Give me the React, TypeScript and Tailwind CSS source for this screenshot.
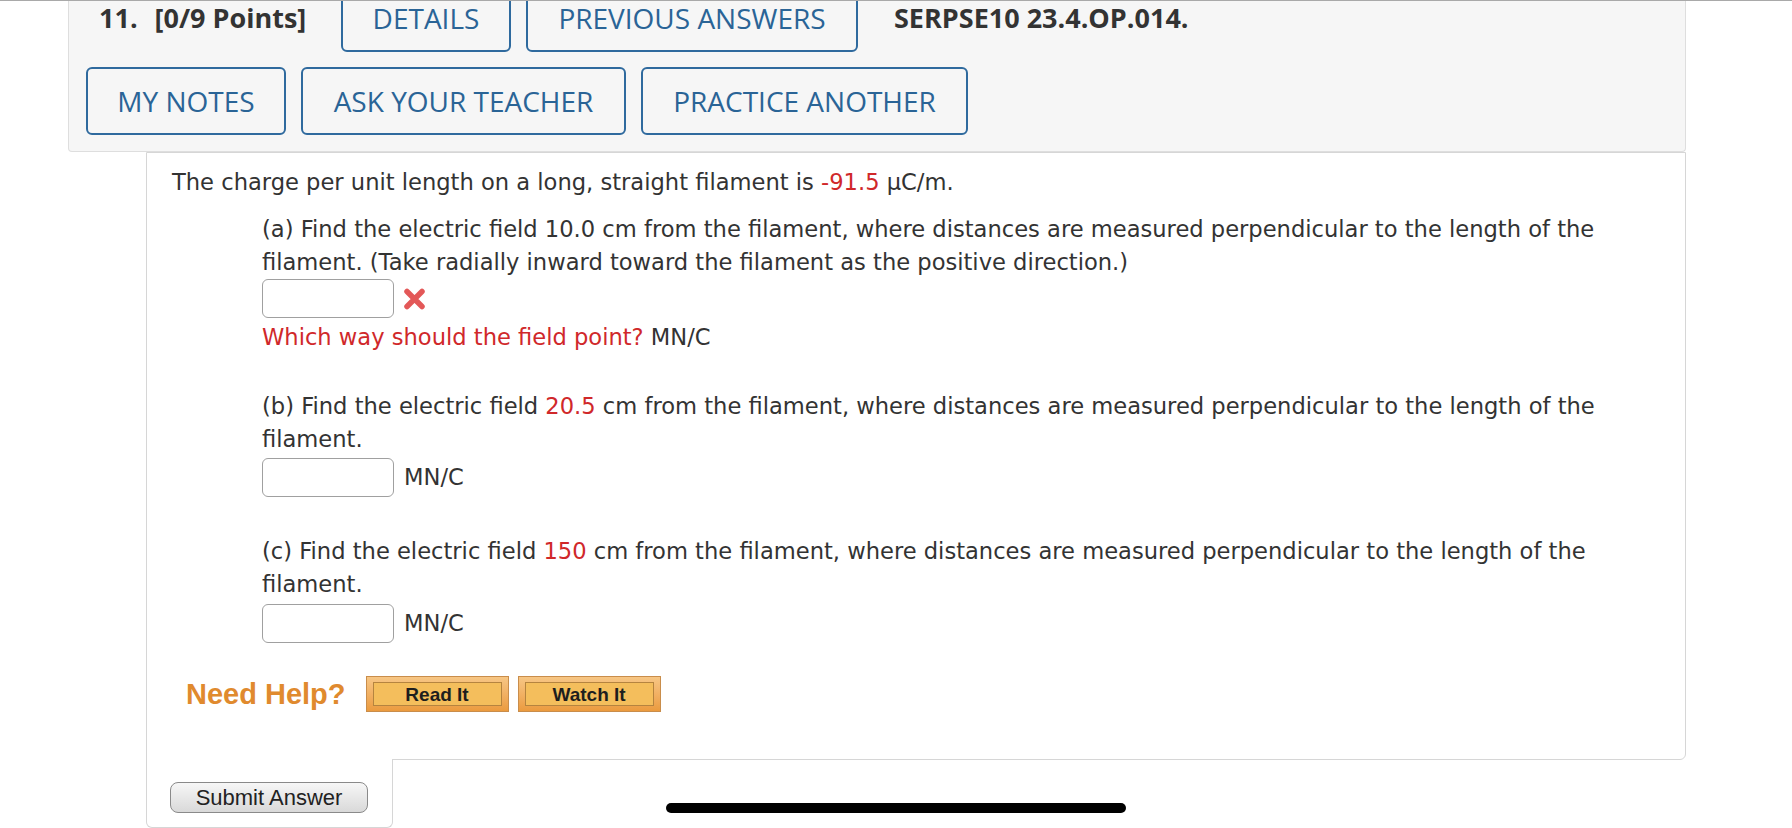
import React from "react";

const RED = "text-[#d0282a]";

function AnswerBox() {
  return <div className="w-[132px] h-[39px] rounded-[6px] border-[1.5px] border-[#a0a0a0] bg-white shrink-0" />;
}

function WrongMark() {
  return (
    <svg width="26" height="22" viewBox="0 0 26 22" className="ml-[8px]">
      <path d="M5 3.5 L20 18.5 M20 3.5 L5 18.5" stroke="#e35858" strokeWidth="5.5" strokeLinecap="round" />
    </svg>
  );
}

function HelpButton({ label }: { label: string }) {
  return (
    <div className="w-[143px] h-[36px] border border-[#c98d4b] bg-linear-to-b from-[#f7c684] to-[#eb9b3e] px-[6px] py-[5px]">
      <div className="h-full border border-[#b5843f] bg-[#f4be5c] flex items-center justify-center font-bold text-[19px] text-[#1e1e1e] [font-family:'Liberation_Sans',Arial,sans-serif]">
        {label}
      </div>
    </div>
  );
}

function BlueButton({ label, w }: { label: string; w: string }) {
  return (
    <div
      className={`${w} h-[68px] shrink-0 border-2 border-[#2f6a9e] rounded-[6px] text-[#2a6496] text-[28px] flex items-center justify-center`}
    >
      {label}
    </div>
  );
}

export default function App() {
  return (
    <div className="relative w-[1792px] h-[828px] overflow-hidden bg-white border-t border-[#a9a9a9] text-[#333]">
      {/* header box */}
      <div className="ml-[68px] w-[1618px] bg-[#f6f6f6] border-x border-b border-[#dedede] rounded-b-[4px] pl-[17px] pb-[16px] [font-family:'Open_Sans',sans-serif]">
        <div className="flex items-center -mt-[17px] h-[68px] gap-[15px]">
          <div className="w-[240px] pl-[13px] font-bold text-[27px] text-[#333] whitespace-nowrap">
            <span>11.</span>
            <span className="ml-[17px]">[0/9 Points]</span>
          </div>
          <BlueButton label="DETAILS" w="w-[170px]" />
          <BlueButton label="PREVIOUS ANSWERS" w="w-[332px]" />
          <div className="ml-[21px] font-bold text-[27px] text-[#333] whitespace-nowrap">SERPSE10 23.4.OP.014.</div>
        </div>
        <div className="flex gap-[15px] mt-[15px]">
          <BlueButton label="MY NOTES" w="w-[200px]" />
          <BlueButton label="ASK YOUR TEACHER" w="w-[325px]" />
          <BlueButton label="PRACTICE ANOTHER" w="w-[327px]" />
        </div>
      </div>

      {/* question box */}
      <div className="ml-[146px] w-[1540px] border border-[#d6d6d6] rounded-br-[6px] pt-[13px] pl-[25px] pr-[40px] pb-[47px] text-[22.6px] leading-[33px] [font-family:'DejaVu_Sans',Verdana,sans-serif]">
        <p>
          The charge per unit length on a long, straight filament is <span className={RED}>-91.5</span> µC/m.
        </p>
        <div className="ml-[90px] mt-[14px]">
          <p>
            (a) Find the electric field 10.0 cm from the filament, where distances are measured perpendicular to the length of the filament. (Take radially inward toward the filament as the positive direction.)
          </p>
          <div className="flex items-center">
            <AnswerBox />
            <WrongMark />
          </div>
          <p className="mt-[3px]">
            <span className={RED}>Which way should the field point?</span> MN/C
          </p>

          <p className="mt-[36px]">
            (b) Find the electric field <span className={RED}>20.5</span> cm from the filament, where distances are measured perpendicular to the length of the filament.
          </p>
          <div className="flex items-center mt-[2px]">
            <AnswerBox />
            <span className="ml-[10px]">MN/C</span>
          </div>

          <p className="mt-[38px]">
            (c) Find the electric field <span className={RED}>150</span> cm from the filament, where distances are measured perpendicular to the length of the filament.
          </p>
          <div className="flex items-center mt-[3px]">
            <AnswerBox />
            <span className="ml-[10px]">MN/C</span>
          </div>
        </div>

        <div className="flex items-center mt-[33px] ml-[14px]">
          <span className="font-bold text-[29px] leading-[36px] text-[#e08a2e] [font-family:'Liberation_Sans',Arial,sans-serif]">
            Need Help?
          </span>
          <div className="ml-[20px] flex gap-[9px]">
            <HelpButton label="Read It" />
            <HelpButton label="Watch It" />
          </div>
        </div>
      </div>

      {/* submit tab */}
      <div className="ml-[146px] w-[247px] h-[69px] -mt-px bg-white border-x border-b border-[#d6d6d6] rounded-b-[6px] pl-[23px] pt-[23px]">
        <div className="w-[198px] h-[31px] rounded-[8px] border border-[#8a8a8a] bg-linear-to-b from-[#f7f7f7] to-[#d9d9d9] text-[22px] text-[#222] flex items-center justify-center [font-family:'Liberation_Sans',Arial,sans-serif]">
          Submit Answer
        </div>
      </div>

      {/* home indicator */}
      <div className="absolute left-[666px] top-[802px] w-[460px] h-[10px] rounded-full bg-black" />
    </div>
  );
}
